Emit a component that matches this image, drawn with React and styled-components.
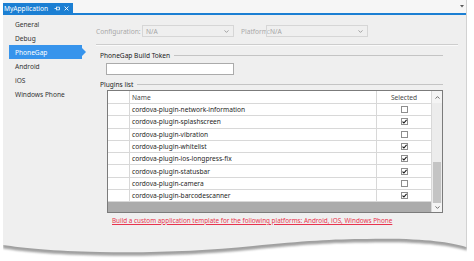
import React from "react";
import styled, { createGlobalStyle, css } from "styled-components";

const GlobalStyle = createGlobalStyle`
  html, body {
    margin: 0;
    padding: 0;
    background: #ffffff;
  }
  body {
    font-family: "Noto Sans", "Open Sans", sans-serif;
    font-size: 6.6px;
    color: #1e1e1e;
  }
`;

const navItems = ["General", "Debug", "PhoneGap", "Android", "iOS", "Windows Phone"];

const plugins = [
  ["cordova-plugin-network-information", false],
  ["cordova-plugin-splashscreen", true],
  ["cordova-plugin-vibration", false],
  ["cordova-plugin-whitelist", true],
  ["cordova-plugin-ios-longpress-fix", true],
  ["cordova-plugin-statusbar", true],
  ["cordova-plugin-camera", false],
  ["cordova-plugin-barcodescanner", true],
];

const Chevron = ({ up, color = "#9a9a9a" }) => (
  <svg width="5" height="3" viewBox="0 0 5 3">
    <path
      d={up ? "M0.5 2.6 L2.5 0.6 L4.5 2.6" : "M0.5 0.4 L2.5 2.4 L4.5 0.4"}
      fill="none"
      stroke={color}
      strokeWidth="0.9"
    />
  </svg>
);

const App = () => {
  return (
    <>
      <GlobalStyle />
      <Window>
        <Sheet>
          <TabStrip>
            <Tab>
              <TabTitle>MyApplication</TabTitle>
              <svg width="6" height="5" viewBox="0 0 6 5">
                <path d="M0.5 2.5 H2.5 M2.5 0.8 V4.2 M2.5 1.2 H5.5 V3.8 H2.5" fill="none" stroke="#fff" strokeWidth="0.8" />
              </svg>
              <svg width="5" height="5" viewBox="0 0 5 5">
                <path d="M0.6 0.6 L4.4 4.4 M4.4 0.6 L0.6 4.4" stroke="#fff" strokeWidth="0.9" />
              </svg>
            </Tab>
            <svg width="4" height="4" viewBox="0 0 4 4">
              <path d="M0 1 H4 L2 3.4 Z" fill="#5a5a5a" />
            </svg>
          </TabStrip>
          <Body>
            <Nav>
              {navItems.map((item) => (
                <NavItem key={item} $active={item === "PhoneGap"}>
                  {item}
                </NavItem>
              ))}
            </Nav>
            <Content>
              <ConfigRow>
                <FieldLabel $width={46}>Configuration:</FieldLabel>
                <Combo $width={92}>
                  <span>N/A</span>
                  <Chevron />
                </Combo>
                <FieldLabel $width={25} $gap={7}>
                  Platform:
                </FieldLabel>
                <Combo $width={102}>
                  <span>N/A</span>
                  <Chevron />
                </Combo>
              </ConfigRow>
              <Separator />
              <GroupHeader>PhoneGap Build Token</GroupHeader>
              <TokenInput />
              <GroupHeader>Plugins list</GroupHeader>
              <Grid>
                <Table>
                  <HeaderRow>
                    <Cell />
                    <Cell>Name</Cell>
                    <Cell $center $last>
                      Selected
                    </Cell>
                  </HeaderRow>
                  {plugins.map(([name, checked]) => (
                    <Row key={name}>
                      <Cell />
                      <Cell $dark>{name}</Cell>
                      <Cell $center $last>
                        <CheckBox>
                          {checked && (
                            <svg width="5" height="5" viewBox="0 0 5 5">
                              <path d="M0.5 2.6 L1.9 4 L4.6 0.8" fill="none" stroke="#151515" strokeWidth="1.1" />
                            </svg>
                          )}
                        </CheckBox>
                      </Cell>
                    </Row>
                  ))}
                  <Filler />
                </Table>
                <ScrollBar>
                  <ScrollArrow>
                    <Chevron up color="#606060" />
                  </ScrollArrow>
                  <ScrollTrack>
                    <ScrollThumb />
                  </ScrollTrack>
                  <ScrollArrow $bottom>
                    <Chevron color="#606060" />
                  </ScrollArrow>
                </ScrollBar>
              </Grid>
              <BuildLink>
                Build a custom application template for the following platforms: Android, iOS, Windows Phone
              </BuildLink>
            </Content>
          </Body>
        </Sheet>
        <TornEdge width="464" height="34" viewBox="0 0 464 34">
          <defs>
            <filter id="edgeBlur" x="-5%" y="-20%" width="110%" height="160%">
              <feGaussianBlur stdDeviation="1.3" />
            </filter>
          </defs>
          <path
            d="M0 0 H464 V23 C446 18 420 14 364 15 C330 15 300 17 250 22 C200 27 150 29 97 28 C50 27 20 24 0 21 Z"
            fill="#a0a0a0"
            filter="url(#edgeBlur)"
            transform="translate(0 1.4)"
          />
          <path
            d="M0 0 H463 V21 C445 16 420 12 364 13 C330 13 300 15 250 20 C200 25 150 27 97 26 C50 25 20 22 0 19 Z"
            fill="#efefef"
          />
          <path d="M463 0 V21" stroke="#d2d2d2" strokeWidth="1" transform="translate(0.5 0)" />
        </TornEdge>
      </Window>
    </>
  );
};

export default App;

const Window = styled.div`
  margin-left: 3px;
  width: 464px;
  display: flex;
  flex-direction: column;
`;

const Sheet = styled.div`
  width: 463px;
  background: #efefef;
  border-right: 1px solid #d2d2d2;
`;

const TabStrip = styled.div`
  height: 13px;
  display: flex;
  align-items: flex-end;
  justify-content: space-between;
  padding-right: 2px;
  background: #f6f6f6;
  border-bottom: 2px solid #1b7fd3;
  svg {
    margin-bottom: 5px;
  }
`;

const Tab = styled.div`
  height: 10px;
  width: 70px;
  box-sizing: border-box;
  padding-left: 1px;
  display: flex;
  align-items: center;
  gap: 4px;
  background: #1b7fd3;
  color: #ffffff;
  svg {
    margin-bottom: 0;
  }
`;

const TabTitle = styled.span`
  width: 46px;
`;

const Body = styled.div`
  display: flex;
`;

const Nav = styled.div`
  width: 93px;
  box-sizing: border-box;
  padding: 2px 0 0 6px;
  display: flex;
  flex-direction: column;
`;

const NavItem = styled.div`
  position: relative;
  width: 73px;
  height: 14px;
  box-sizing: border-box;
  padding-left: 6px;
  display: flex;
  align-items: center;
  color: #333333;
  ${({ $active }) =>
    $active &&
    css`
      color: #ffffff;
      background: #3794ec;
      &::after {
        content: "";
        position: absolute;
        left: 100%;
        top: 50%;
        margin-top: -4px;
        border-left: 4px solid #3794ec;
        border-top: 4px solid transparent;
        border-bottom: 4px solid transparent;
      }
    `}
`;

const Content = styled.div`
  flex: 1;
  display: flex;
  flex-direction: column;
  padding: 10px 8px 0 0;
`;

const ConfigRow = styled.div`
  height: 12px;
  display: flex;
  align-items: center;
`;

const FieldLabel = styled.span`
  width: ${({ $width }) => $width}px;
  margin-left: ${({ $gap = 0 }) => $gap}px;
  color: #a9a9a9;
`;

const Combo = styled.div`
  width: ${({ $width }) => $width}px;
  height: 12px;
  box-sizing: border-box;
  padding: 0 4px 0 3px;
  display: flex;
  align-items: center;
  justify-content: space-between;
  border: 1px solid #d6d6d6;
  color: #a4a4a4;
`;

const Separator = styled.div`
  margin-top: 7px;
  border-top: 1px solid #cdcdcd;
  border-bottom: 1px solid #fafafa;
`;

const GroupHeader = styled.div`
  height: 10px;
  margin: 4px 15px 0 4px;
  display: flex;
  align-items: center;
  gap: 4px;
  color: #1a1a1a;
  &::after {
    content: "";
    flex: 1;
    border-top: 1px solid #c4c4c4;
  }
`;

const TokenInput = styled.div`
  width: 128px;
  height: 12px;
  margin: 3px 0 0 10px;
  box-sizing: border-box;
  background: #ffffff;
  border: 1px solid #ababab;
`;

const Grid = styled.div`
  height: 123px;
  margin: 1px 15px 0 11px;
  box-sizing: border-box;
  display: flex;
  border: 1px solid #7b7b7b;
  background: #ffffff;
`;

const Table = styled.div`
  flex: 1;
  display: flex;
  flex-direction: column;
`;

const rowLayout = css`
  display: grid;
  grid-template-columns: 22px 1fr 54px;
  box-sizing: border-box;
  background: #ffffff;
`;

const HeaderRow = styled.div`
  ${rowLayout};
  height: 13px;
  border-bottom: 1px solid #d8d8d8;
  color: #4a4a4a;
`;

const Row = styled.div`
  ${rowLayout};
  height: 12.3px;
  border-bottom: 1px solid #d8d8d8;
`;

const Cell = styled.div`
  display: flex;
  align-items: center;
  justify-content: ${({ $center }) => ($center ? "center" : "flex-start")};
  padding-left: ${({ $center }) => ($center ? 0 : 2)}px;
  border-right: ${({ $last }) => ($last ? "none" : "1px solid #d8d8d8")};
  color: ${({ $dark }) => ($dark ? "#1e1e1e" : "inherit")};
  overflow: hidden;
  white-space: nowrap;
`;

const CheckBox = styled.div`
  width: 7px;
  height: 7px;
  box-sizing: border-box;
  display: flex;
  align-items: center;
  justify-content: center;
  border: 1px solid #8e8e8e;
  background: #ffffff;
`;

const Filler = styled.div`
  flex: 1;
  background: #ababab;
`;

const ScrollBar = styled.div`
  width: 10px;
  display: flex;
  flex-direction: column;
  border-left: 1px solid #d8d8d8;
  background: #ececec;
`;

const ScrollArrow = styled.div`
  height: ${({ $bottom }) => ($bottom ? 9 : 12)}px;
  display: flex;
  align-items: center;
  justify-content: center;
  background: #f4f4f4;
`;

const ScrollTrack = styled.div`
  flex: 1;
  display: flex;
  flex-direction: column;
  justify-content: flex-end;
`;

const ScrollThumb = styled.div`
  height: 41px;
  margin: 0 1px;
  background: #c4c4c4;
`;

const BuildLink = styled.a`
  margin: 3px 0 0 16px;
  line-height: 10px;
  font-size: 6.35px;
  color: #e8344e;
  text-decoration: underline;
  cursor: pointer;
`;

const TornEdge = styled.svg`
  display: block;
`;
